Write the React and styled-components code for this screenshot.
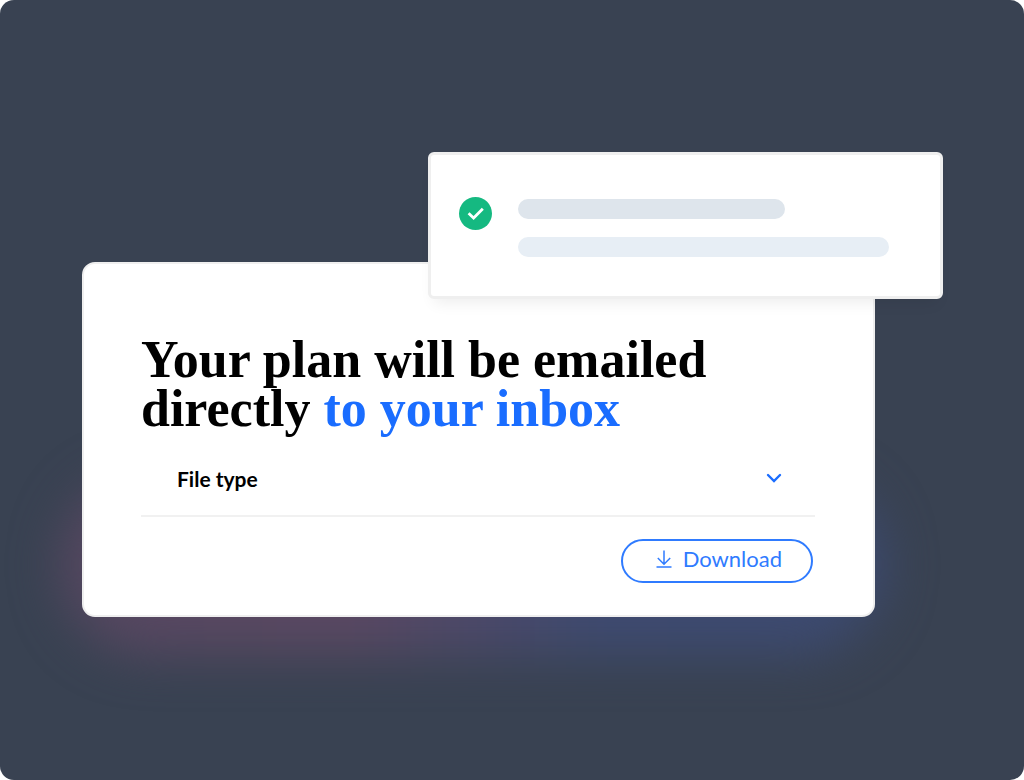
import React, { useState } from 'react'
import styled, { createGlobalStyle } from 'styled-components';

const App = () => {
  const [fileType, setFileType] = useState('');

  return (
    <>
      <GlobalStyle />
      <Stage>
        <Card>
          <Title>
            Your plan will be emailed<br />
            directly <Accent>to your inbox</Accent>
          </Title>
          <Field>
            <Select aria-label="File type" value={fileType} onChange={(e) => setFileType(e.target.value)}>
              <option value="">File type</option>
            </Select>
            <Chevron viewBox="0 0 16 10" aria-hidden="true">
              <path d="M2 2L8 8L14 2" />
            </Chevron>
          </Field>
          <Actions>
            <Button type="button">
              <DownloadIcon viewBox="0 0 16 18" aria-hidden="true">
                <path d="M8 0.5V14M1.8 8L8 14.2L14.2 8M0.5 17H15.5" />
              </DownloadIcon>
              Download
            </Button>
          </Actions>
          <Toast role="status" aria-label="Success">
            <CheckIcon viewBox="0 0 33 33" aria-hidden="true">
              <circle cx="16.5" cy="16.5" r="16.5" />
              <path d="M9.6 16.2L14.6 21L23.8 11.8" />
            </CheckIcon>
            <Lines>
              <Line $width="72%" $color="#dee5ec" />
              <Line $width="100%" $color="#e7eef5" />
            </Lines>
          </Toast>
        </Card>
      </Stage>
    </>
  )
}

export default App;

const GlobalStyle = createGlobalStyle`
  * {
    box-sizing: border-box;
  }

  body {
    margin: 0;
    background: #fff;
    font-family: Lato, 'Liberation Sans', sans-serif;
  }
`

const Stage = styled.main`
  isolation: isolate;
  min-height: 100vh;
  padding: 262px 149px 80px 82px;
  border-radius: 14px;
  background: #394252;
`

const Card = styled.section`
  position: relative;
  padding: 71px 58px 32px 57px;
  border: 2px solid #efefef;
  border-radius: 13px;
  background: #fff;

  /* coloured glow behind the lower half */
  &::before {
    content: '';
    position: absolute;
    z-index: -1;
    top: 210px;
    right: -12px;
    bottom: -40px;
    left: -24px;
    border-radius: 120px;
    background: linear-gradient(90deg, #554760 0%, #5a4862 35%, #3e4a70 65%, #3c4a70 100%);
    filter: blur(24px);
  }
`

const Title = styled.h1`
  margin: 0;
  font-family: 'Liberation Serif', serif;
  font-size: 52px;
  font-weight: 700;
  line-height: 49px;
  color: #000;
`

const Accent = styled.span`
  color: #1a6dff;
`

const Field = styled.div`
  display: grid;
  align-items: center;
  margin-top: 8px;
  border-bottom: 2px solid #f1f1f1;
`

const Select = styled.select`
  grid-area: 1 / 1;
  appearance: none;
  height: 74px;
  padding: 0 64px 0 36px;
  border: 0;
  background: transparent;
  font-family: inherit;
  font-size: 21px;
  font-weight: 700;
  color: #000;
  cursor: pointer;
`

const Chevron = styled.svg`
  grid-area: 1 / 1;
  justify-self: end;
  width: 16px;
  height: 10px;
  margin-right: 33px;
  fill: none;
  stroke: #1a6dff;
  stroke-width: 2.4;
  stroke-linecap: round;
  pointer-events: none;
`

const Actions = styled.div`
  display: flex;
  justify-content: flex-end;
  margin-top: 22px;
  padding-right: 2px;
`

const Button = styled.button`
  display: flex;
  align-items: center;
  gap: 11px;
  height: 44px;
  padding: 0 29px 4px 33px;
  border: 2px solid #2f7bff;
  border-radius: 22px;
  background: transparent;
  font-family: inherit;
  font-size: 22px;
  line-height: 26px;
  color: #2f7bff;
  cursor: pointer;
`

const DownloadIcon = styled.svg`
  width: 16px;
  height: 18px;
  fill: none;
  stroke: currentColor;
  stroke-width: 1.5;
`

const Toast = styled.div`
  position: absolute;
  top: -112px;
  right: -70px;
  display: flex;
  align-items: flex-start;
  gap: 26px;
  width: calc(65% + 2px);
  padding: 42px 51px 39px 28px;
  border: 3px solid #efefef;
  border-radius: 6px;
  background: #fff;
  box-shadow: 0 10px 14px -6px rgba(0, 0, 0, 0.07);
`

const CheckIcon = styled.svg`
  flex: none;
  width: 33px;
  height: 33px;
  fill: #15b981;

  path {
    fill: none;
    stroke: #fff;
    stroke-width: 2.8;
  }
`

const Lines = styled.div`
  display: flex;
  flex: 1;
  flex-direction: column;
  gap: 18px;
  padding-top: 2px;
`

const Line = styled.div`
  width: ${({ $width }) => $width};
  height: 20px;
  border-radius: 10px;
  background: ${({ $color }) => $color};
`
